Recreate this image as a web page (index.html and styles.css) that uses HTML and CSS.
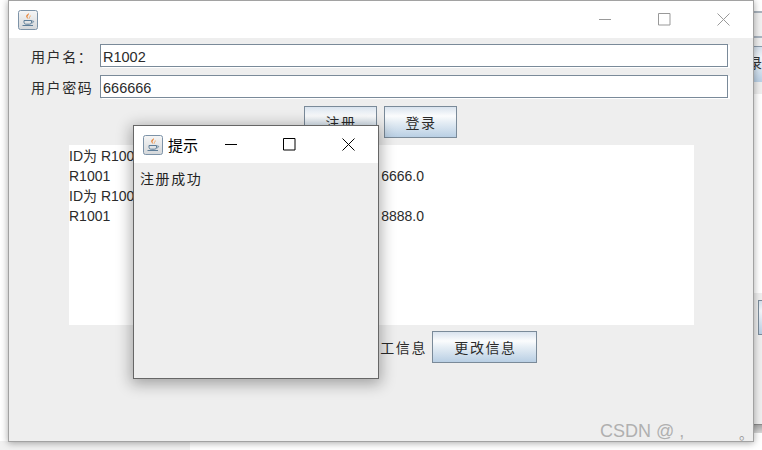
FILE: index.html
```html
<!DOCTYPE html>
<html lang="zh">
<head>
<meta charset="utf-8">
<title>提示</title>
<link rel="stylesheet" href="styles.css">
</head>
<body>
<svg class="defs" width="0" height="0" aria-hidden="true">
  <symbol id="java" viewBox="0 0 20 20">
    <rect x="0.5" y="0.5" width="19" height="19" rx="2" fill="url(#jbg)" stroke="#7d93a8"/>
    <path d="M10.500 3c1.500 1.600-1.800 2.600-.8 4.600.3.600.6.900.8 1.400-1.800-1-3-2.300-2-3.800.6-.9 2-1.200 2-2.200z" fill="#e8843a"/>
    <path d="M12.300 5.500c.3 1-1.200 1.500-.9 3" fill="none" stroke="#f0a868"/>
    <path d="M6 10.500h7.500v1.700c0 1.300-1 2-2.200 2H8.200c-1.200 0-2.200-.7-2.200-2z" fill="none" stroke="#5d7d98"/>
    <path d="M13.500 11h1.600c.9 0 .9 1.800-1.800 2" fill="none" stroke="#5d7d98" stroke-width=".8"/>
    <path d="M4.500 15.500h10.500" stroke="#5d7d98"/>
    <defs>
      <linearGradient id="jbg" x1="0" y1="0" x2="0" y2="1">
        <stop offset="0" stop-color="#f6f6f6"/>
        <stop offset="1" stop-color="#d4d7da"/>
      </linearGradient>
    </defs>
  </symbol>
  <symbol id="win-min" viewBox="0 0 13 13"><path d="M0 6.500h12"/></symbol>
  <symbol id="win-max" viewBox="0 0 13 13"><path d="M.5.500h11.500v11.500H.5z"/></symbol>
  <symbol id="win-close" viewBox="0 0 13 13"><path d="M.5.500l12 12M12.500.500l-12 12"/></symbol>
</svg>

<div class="desktop">
  <div class="behind behind-top">
    <div class="behind-bar"></div>
    <div class="behind-button"><span class="behind-text">录</span></div>
  </div>
  <div class="behind behind-low">
    <div class="behind-button behind-button-low"></div>
  </div>
  <div class="behind-bottom"></div>
  <div class="behind-left"></div>

  <section class="window main-window">
    <header class="titlebar main-title">
      <svg class="app-icon"><use href="#java"/></svg>
      <div class="controls controls-main">
        <svg class="ctl"><use href="#win-min"/></svg>
        <svg class="ctl"><use href="#win-max"/></svg>
        <svg class="ctl"><use href="#win-close"/></svg>
      </div>
    </header>
    <div class="body">
      <div class="form-row">
        <label class="label">用户名：</label>
        <div class="field field-name">R1002</div>
      </div>
      <div class="form-row">
        <label class="label">用户密码</label>
        <div class="field">666666</div>
      </div>
      <div class="actions">
        <button class="btn">注册</button>
        <button class="btn">登录</button>
      </div>
      <div class="output">
        <div class="line">ID为 R1001的员工信息如下</div>
        <div class="line line-split"><span>R1001</span><span>6666.0</span></div>
        <div class="line">ID为 R1001的员工信息如下</div>
        <div class="line line-split"><span>R1001</span><span>8888.0</span></div>
      </div>
      <div class="footer-row">
        <span class="footer-label">员工信息</span>
        <button class="btn btn-wide">更改信息</button>
      </div>
    </div>
  </section>

  <section class="window dialog">
    <header class="titlebar dialog-title">
      <svg class="app-icon"><use href="#java"/></svg>
      <span class="dialog-name">提示</span>
      <div class="controls controls-dialog">
        <svg class="ctl"><use href="#win-min"/></svg>
        <svg class="ctl"><use href="#win-max"/></svg>
        <svg class="ctl ctl-last"><use href="#win-close"/></svg>
      </div>
    </header>
    <div class="dialog-body">注册成功</div>
  </section>

  <div class="watermark">CSDN @ ,</div>
  <div class="watermark-dot">。</div>
</div>
</body>
</html>
```
FILE: styles.css
```css
* { box-sizing: border-box; }
html, body { margin: 0; padding: 0; }
body {
  width: 762px;
  height: 450px;
  overflow: hidden;
  background: #fff;
  font-family: "Liberation Sans", "Noto Sans CJK SC", sans-serif;
  color: #2b2b2b;
}
.defs { position: absolute; }
.desktop { position: relative; width: 762px; height: 450px; overflow: hidden; }

.behind { position: absolute; left: 754px; width: 8px; background: #eee; }
.behind-top { top: 0; height: 94px; background: linear-gradient(#fff 0 11px, #a9b3bd 11px 13px, #f0f0f0 13px 36px, #a9b4c0 36px 38px, #eee 38px); }
.behind-bar { height: 46px; }
.behind-button {
  height: 36px;
  background: linear-gradient(#d4e0ec, #f2f6fa 30%, #b9cfe4);
  border-top: 1px solid #8a9aaa;
  overflow: hidden;
  white-space: nowrap;
}
.behind-text { display: block; margin-left: -6px; font-size: 14px; line-height: 32px; color: #333; }
.behind-low { top: 293px; height: 131px; padding: 7px 0 0 4px; }
.behind-button-low { height: 35px; border: 1px solid #7a8a99; border-right: 0; }
.behind-bottom {
  position: absolute; left: 754px; top: 424px; width: 8px; height: 9px;
  background: linear-gradient(#777, #aaa 15%, #d8d8d8);
}
.behind-left { position: absolute; left: 0; top: 441px; width: 190px; height: 9px; background: #f1f1f1; }

.window { position: absolute; background: #eee; }
.main-window {
  left: 8px; top: 0; width: 746px; height: 442px;
  border: 1px solid #a2a2a2;
  box-shadow: 0 1px 7px rgba(0, 0, 0, .35);
}
.dialog {
  left: 133px; top: 125px; width: 246px; height: 254px;
  border: 1px solid #666;
  box-shadow: 0 3px 14px 2px rgba(0, 0, 0, .32);
}
.titlebar { position: relative; display: flex; align-items: center; background: #fff; }
.main-title { height: 37px; padding-left: 9px; }
.dialog-title { height: 37px; padding-left: 9px; }
.app-icon { width: 20px; height: 20px; flex: none; }
.dialog-name { margin-left: 5px; font-size: 15px; color: #000; font-family: "Noto Sans CJK SC", sans-serif; }
.controls { display: flex; margin-left: auto; }
.ctl { width: 13px; height: 13px; fill: none; stroke-width: 1; }
.ctl-last { margin-left: 1px; }
.controls-main { gap: 46px; padding-right: 23px; stroke: #999; }
.controls-dialog { gap: 45px; padding-right: 23px; stroke: #000; }

.body { padding: 6px 0 0; height: 403px; }
.form-row { display: flex; align-items: center; padding-left: 22px; margin-bottom: 8px; }
.label {
  width: 69px;
  font-size: 14px;
  letter-spacing: 1.6px;
  white-space: nowrap;
  font-family: "Noto Sans CJK SC", sans-serif;
}
.field {
  width: 628px;
  height: 23px;
  padding-left: 2px;
  background: #fff;
  border: 1px solid #7a8a99;
  box-shadow: 2px 1px 0 #fff;
  font-size: 14.5px;
  line-height: 24px;
}
.actions { display: flex; justify-content: center; gap: 7px; padding-right: 2px; }
.btn {
  width: 73px;
  height: 32px;
  padding: 0 0 0 2px;
  border: 1px solid #7a8a99;
  background: linear-gradient(#d9e3ee, #fbfcfd 30%, #e6eef5 50%, #b9cfe4);
  font-family: "Noto Sans CJK SC", sans-serif;
  font-size: 14px;
  letter-spacing: 1.6px;
  color: #2b2b2b;
}
.btn-wide { width: 105px; }
.output {
  width: 625px;
  height: 180px;
  margin: 7px 0 0 60px;
  background: #fff;
  font-size: 14px;
  line-height: 20px;
  padding-top: 1px;
}
.line { white-space: nowrap; }
.line-split { display: flex; justify-content: space-between; width: 356px; }
.line-split span:last-child { margin-right: 1px; }
.footer-row {
  display: flex;
  align-items: center;
  justify-content: flex-end;
  gap: 6px;
  margin-top: 6px;
  padding-right: 216px;
}
.footer-label {
  font-family: "Noto Sans CJK SC", sans-serif;
  font-size: 14px;
  letter-spacing: 1.6px;
  margin-right: -1px;
}
.dialog-body {
  padding: 5px 6px;
  font-family: "Noto Sans CJK SC", sans-serif;
  font-size: 14px;
  letter-spacing: 1.6px;
  line-height: 20px;
  color: #222;
}
.watermark {
  position: absolute;
  left: 600px;
  top: 421px;
  font-size: 18px;
  line-height: 21px;
  color: #b0b0b0;
  white-space: nowrap;
}
.watermark-dot {
  position: absolute;
  left: 739px;
  top: 425px;
  font-size: 14px;
  line-height: 16px;
  color: #999;
  font-family: "Noto Sans CJK SC", sans-serif;
}
```
